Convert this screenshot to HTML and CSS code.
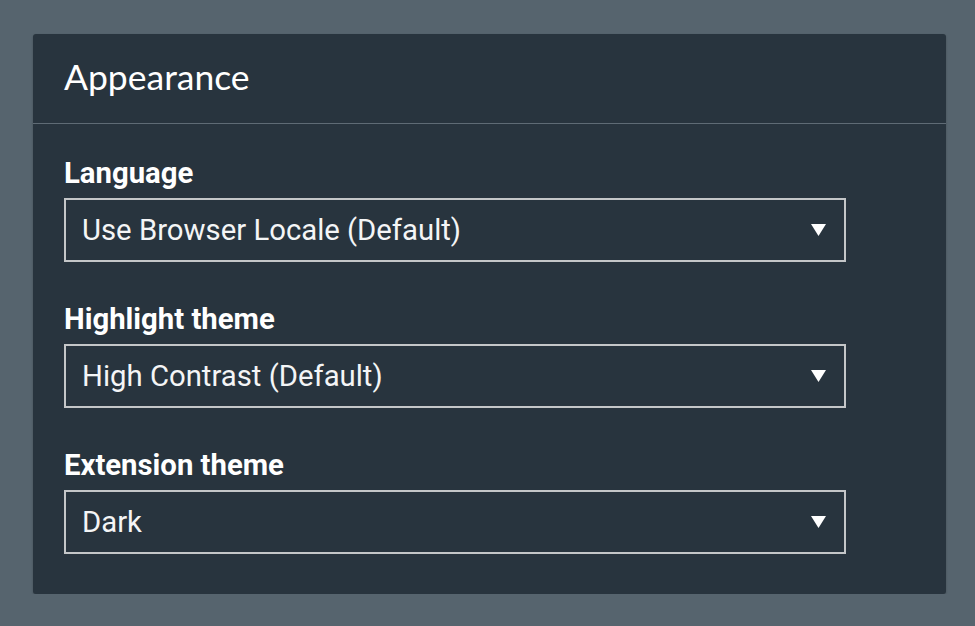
FILE: index.html
```html
<!DOCTYPE html>
<html lang="en">
<head>
<meta charset="utf-8">
<title>Appearance</title>
<link rel="stylesheet" href="styles.css">
</head>
<body>
<div class="card">
  <div class="card-header">
    <h1 class="card-title">Appearance</h1>
  </div>
  <div class="card-body">
    <div class="field">
      <div class="field-label">Language</div>
      <div class="select">
        <span class="select-value">Use Browser Locale (Default)</span>
        <svg class="select-arrow" width="15" height="12" viewBox="0 0 15 12"><polygon points="0,0 15,0 7.5,12" fill="#ffffff"/></svg>
      </div>
    </div>
    <div class="field">
      <div class="field-label">Highlight theme</div>
      <div class="select">
        <span class="select-value">High Contrast (Default)</span>
        <svg class="select-arrow" width="15" height="12" viewBox="0 0 15 12"><polygon points="0,0 15,0 7.5,12" fill="#ffffff"/></svg>
      </div>
    </div>
    <div class="field">
      <div class="field-label">Extension theme</div>
      <div class="select">
        <span class="select-value">Dark</span>
        <svg class="select-arrow" width="15" height="12" viewBox="0 0 15 12"><polygon points="0,0 15,0 7.5,12" fill="#ffffff"/></svg>
      </div>
    </div>
  </div>
</div>
</body>
</html>
```

FILE: styles.css
```css
html, body {
  margin: 0;
  padding: 0;
}
body {
  background: #56646e;
  font-family: Roboto, "Liberation Sans", sans-serif;
  color: #f2f4f5;
  padding: 34px 29px 0 33px;
}
.card {
  width: 913px;
  background: #28343e;
  border-radius: 3px;
  box-shadow: 0 1px 2px rgba(0, 0, 0, 0.25);
}
.card-header {
  height: 89px;
  display: flex;
  align-items: center;
  padding-left: 31px;
  border-bottom: 1px solid #5f6b75;
}
.card-title {
  margin: 0 0 3px 0;
  font-family: Lato, "Open Sans", sans-serif;
  font-weight: 400;
  font-size: 35.5px;
  line-height: 44px;
  color: #ffffff;
}
.card-body {
  padding: 32px 31px 40px 31px;
  display: flex;
  flex-direction: column;
  gap: 40px;
}
.field {
  display: flex;
  flex-direction: column;
  gap: 8px;
}
.field-label {
  font-size: 29.3px;
  line-height: 34px;
  font-weight: 700;
  color: #ffffff;
}
.select {
  width: 782px;
  height: 64px;
  box-sizing: border-box;
  border: 2px solid #c4c6c8;
  display: flex;
  align-items: center;
  justify-content: space-between;
  padding: 0 18px 0 16px;
}
.select-value {
  font-size: 29.3px;
  line-height: 34px;
  color: #f4f5f6;
}
.select-arrow {
  display: block;
}
```
